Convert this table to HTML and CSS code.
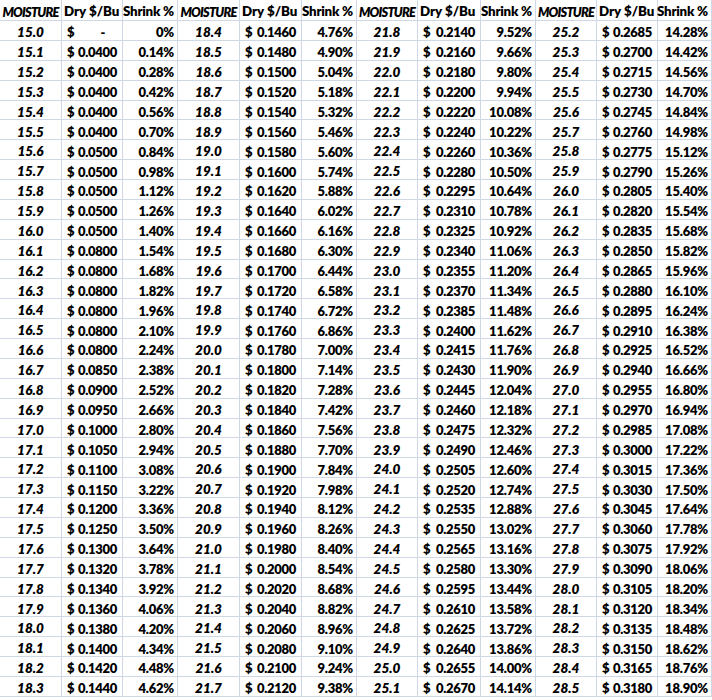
FILE: index.html
```html
<!DOCTYPE html>
<html>
<head>
<meta charset="utf-8">
<link rel="stylesheet" href="styles.css">
</head>
<body>
<div class="sheet">
<div class="h hm">MOISTURE</div><div class="h hd">Dry $/Bu</div><div class="h hs">Shrink %</div><div class="h hm">MOISTURE</div><div class="h hd">Dry $/Bu</div><div class="h hs">Shrink %</div><div class="h hm">MOISTURE</div><div class="h hd">Dry $/Bu</div><div class="h hs">Shrink %</div><div class="h hm">MOISTURE</div><div class="h hd">Dry $/Bu</div><div class="h hs">Shrink %</div>
<div class="m">15.0</div><div class="d z"><span>$</span><span>-</span></div><div class="s">0%</div><div class="m">18.4</div><div class="d"><span>$</span><span>0.1460</span></div><div class="s">4.76%</div><div class="m">21.8</div><div class="d"><span>$</span><span>0.2140</span></div><div class="s">9.52%</div><div class="m">25.2</div><div class="d"><span>$</span><span>0.2685</span></div><div class="s">14.28%</div>
<div class="m">15.1</div><div class="d"><span>$</span><span>0.0400</span></div><div class="s">0.14%</div><div class="m">18.5</div><div class="d"><span>$</span><span>0.1480</span></div><div class="s">4.90%</div><div class="m">21.9</div><div class="d"><span>$</span><span>0.2160</span></div><div class="s">9.66%</div><div class="m">25.3</div><div class="d"><span>$</span><span>0.2700</span></div><div class="s">14.42%</div>
<div class="m">15.2</div><div class="d"><span>$</span><span>0.0400</span></div><div class="s">0.28%</div><div class="m">18.6</div><div class="d"><span>$</span><span>0.1500</span></div><div class="s">5.04%</div><div class="m">22.0</div><div class="d"><span>$</span><span>0.2180</span></div><div class="s">9.80%</div><div class="m">25.4</div><div class="d"><span>$</span><span>0.2715</span></div><div class="s">14.56%</div>
<div class="m">15.3</div><div class="d"><span>$</span><span>0.0400</span></div><div class="s">0.42%</div><div class="m">18.7</div><div class="d"><span>$</span><span>0.1520</span></div><div class="s">5.18%</div><div class="m">22.1</div><div class="d"><span>$</span><span>0.2200</span></div><div class="s">9.94%</div><div class="m">25.5</div><div class="d"><span>$</span><span>0.2730</span></div><div class="s">14.70%</div>
<div class="m">15.4</div><div class="d"><span>$</span><span>0.0400</span></div><div class="s">0.56%</div><div class="m">18.8</div><div class="d"><span>$</span><span>0.1540</span></div><div class="s">5.32%</div><div class="m">22.2</div><div class="d"><span>$</span><span>0.2220</span></div><div class="s">10.08%</div><div class="m">25.6</div><div class="d"><span>$</span><span>0.2745</span></div><div class="s">14.84%</div>
<div class="m">15.5</div><div class="d"><span>$</span><span>0.0400</span></div><div class="s">0.70%</div><div class="m">18.9</div><div class="d"><span>$</span><span>0.1560</span></div><div class="s">5.46%</div><div class="m">22.3</div><div class="d"><span>$</span><span>0.2240</span></div><div class="s">10.22%</div><div class="m">25.7</div><div class="d"><span>$</span><span>0.2760</span></div><div class="s">14.98%</div>
<div class="m">15.6</div><div class="d"><span>$</span><span>0.0500</span></div><div class="s">0.84%</div><div class="m">19.0</div><div class="d"><span>$</span><span>0.1580</span></div><div class="s">5.60%</div><div class="m">22.4</div><div class="d"><span>$</span><span>0.2260</span></div><div class="s">10.36%</div><div class="m">25.8</div><div class="d"><span>$</span><span>0.2775</span></div><div class="s">15.12%</div>
<div class="m">15.7</div><div class="d"><span>$</span><span>0.0500</span></div><div class="s">0.98%</div><div class="m">19.1</div><div class="d"><span>$</span><span>0.1600</span></div><div class="s">5.74%</div><div class="m">22.5</div><div class="d"><span>$</span><span>0.2280</span></div><div class="s">10.50%</div><div class="m">25.9</div><div class="d"><span>$</span><span>0.2790</span></div><div class="s">15.26%</div>
<div class="m">15.8</div><div class="d"><span>$</span><span>0.0500</span></div><div class="s">1.12%</div><div class="m">19.2</div><div class="d"><span>$</span><span>0.1620</span></div><div class="s">5.88%</div><div class="m">22.6</div><div class="d"><span>$</span><span>0.2295</span></div><div class="s">10.64%</div><div class="m">26.0</div><div class="d"><span>$</span><span>0.2805</span></div><div class="s">15.40%</div>
<div class="m">15.9</div><div class="d"><span>$</span><span>0.0500</span></div><div class="s">1.26%</div><div class="m">19.3</div><div class="d"><span>$</span><span>0.1640</span></div><div class="s">6.02%</div><div class="m">22.7</div><div class="d"><span>$</span><span>0.2310</span></div><div class="s">10.78%</div><div class="m">26.1</div><div class="d"><span>$</span><span>0.2820</span></div><div class="s">15.54%</div>
<div class="m">16.0</div><div class="d"><span>$</span><span>0.0500</span></div><div class="s">1.40%</div><div class="m">19.4</div><div class="d"><span>$</span><span>0.1660</span></div><div class="s">6.16%</div><div class="m">22.8</div><div class="d"><span>$</span><span>0.2325</span></div><div class="s">10.92%</div><div class="m">26.2</div><div class="d"><span>$</span><span>0.2835</span></div><div class="s">15.68%</div>
<div class="m">16.1</div><div class="d"><span>$</span><span>0.0800</span></div><div class="s">1.54%</div><div class="m">19.5</div><div class="d"><span>$</span><span>0.1680</span></div><div class="s">6.30%</div><div class="m">22.9</div><div class="d"><span>$</span><span>0.2340</span></div><div class="s">11.06%</div><div class="m">26.3</div><div class="d"><span>$</span><span>0.2850</span></div><div class="s">15.82%</div>
<div class="m">16.2</div><div class="d"><span>$</span><span>0.0800</span></div><div class="s">1.68%</div><div class="m">19.6</div><div class="d"><span>$</span><span>0.1700</span></div><div class="s">6.44%</div><div class="m">23.0</div><div class="d"><span>$</span><span>0.2355</span></div><div class="s">11.20%</div><div class="m">26.4</div><div class="d"><span>$</span><span>0.2865</span></div><div class="s">15.96%</div>
<div class="m">16.3</div><div class="d"><span>$</span><span>0.0800</span></div><div class="s">1.82%</div><div class="m">19.7</div><div class="d"><span>$</span><span>0.1720</span></div><div class="s">6.58%</div><div class="m">23.1</div><div class="d"><span>$</span><span>0.2370</span></div><div class="s">11.34%</div><div class="m">26.5</div><div class="d"><span>$</span><span>0.2880</span></div><div class="s">16.10%</div>
<div class="m">16.4</div><div class="d"><span>$</span><span>0.0800</span></div><div class="s">1.96%</div><div class="m">19.8</div><div class="d"><span>$</span><span>0.1740</span></div><div class="s">6.72%</div><div class="m">23.2</div><div class="d"><span>$</span><span>0.2385</span></div><div class="s">11.48%</div><div class="m">26.6</div><div class="d"><span>$</span><span>0.2895</span></div><div class="s">16.24%</div>
<div class="m">16.5</div><div class="d"><span>$</span><span>0.0800</span></div><div class="s">2.10%</div><div class="m">19.9</div><div class="d"><span>$</span><span>0.1760</span></div><div class="s">6.86%</div><div class="m">23.3</div><div class="d"><span>$</span><span>0.2400</span></div><div class="s">11.62%</div><div class="m">26.7</div><div class="d"><span>$</span><span>0.2910</span></div><div class="s">16.38%</div>
<div class="m">16.6</div><div class="d"><span>$</span><span>0.0800</span></div><div class="s">2.24%</div><div class="m">20.0</div><div class="d"><span>$</span><span>0.1780</span></div><div class="s">7.00%</div><div class="m">23.4</div><div class="d"><span>$</span><span>0.2415</span></div><div class="s">11.76%</div><div class="m">26.8</div><div class="d"><span>$</span><span>0.2925</span></div><div class="s">16.52%</div>
<div class="m">16.7</div><div class="d"><span>$</span><span>0.0850</span></div><div class="s">2.38%</div><div class="m">20.1</div><div class="d"><span>$</span><span>0.1800</span></div><div class="s">7.14%</div><div class="m">23.5</div><div class="d"><span>$</span><span>0.2430</span></div><div class="s">11.90%</div><div class="m">26.9</div><div class="d"><span>$</span><span>0.2940</span></div><div class="s">16.66%</div>
<div class="m">16.8</div><div class="d"><span>$</span><span>0.0900</span></div><div class="s">2.52%</div><div class="m">20.2</div><div class="d"><span>$</span><span>0.1820</span></div><div class="s">7.28%</div><div class="m">23.6</div><div class="d"><span>$</span><span>0.2445</span></div><div class="s">12.04%</div><div class="m">27.0</div><div class="d"><span>$</span><span>0.2955</span></div><div class="s">16.80%</div>
<div class="m">16.9</div><div class="d"><span>$</span><span>0.0950</span></div><div class="s">2.66%</div><div class="m">20.3</div><div class="d"><span>$</span><span>0.1840</span></div><div class="s">7.42%</div><div class="m">23.7</div><div class="d"><span>$</span><span>0.2460</span></div><div class="s">12.18%</div><div class="m">27.1</div><div class="d"><span>$</span><span>0.2970</span></div><div class="s">16.94%</div>
<div class="m">17.0</div><div class="d"><span>$</span><span>0.1000</span></div><div class="s">2.80%</div><div class="m">20.4</div><div class="d"><span>$</span><span>0.1860</span></div><div class="s">7.56%</div><div class="m">23.8</div><div class="d"><span>$</span><span>0.2475</span></div><div class="s">12.32%</div><div class="m">27.2</div><div class="d"><span>$</span><span>0.2985</span></div><div class="s">17.08%</div>
<div class="m">17.1</div><div class="d"><span>$</span><span>0.1050</span></div><div class="s">2.94%</div><div class="m">20.5</div><div class="d"><span>$</span><span>0.1880</span></div><div class="s">7.70%</div><div class="m">23.9</div><div class="d"><span>$</span><span>0.2490</span></div><div class="s">12.46%</div><div class="m">27.3</div><div class="d"><span>$</span><span>0.3000</span></div><div class="s">17.22%</div>
<div class="m">17.2</div><div class="d"><span>$</span><span>0.1100</span></div><div class="s">3.08%</div><div class="m">20.6</div><div class="d"><span>$</span><span>0.1900</span></div><div class="s">7.84%</div><div class="m">24.0</div><div class="d"><span>$</span><span>0.2505</span></div><div class="s">12.60%</div><div class="m">27.4</div><div class="d"><span>$</span><span>0.3015</span></div><div class="s">17.36%</div>
<div class="m">17.3</div><div class="d"><span>$</span><span>0.1150</span></div><div class="s">3.22%</div><div class="m">20.7</div><div class="d"><span>$</span><span>0.1920</span></div><div class="s">7.98%</div><div class="m">24.1</div><div class="d"><span>$</span><span>0.2520</span></div><div class="s">12.74%</div><div class="m">27.5</div><div class="d"><span>$</span><span>0.3030</span></div><div class="s">17.50%</div>
<div class="m">17.4</div><div class="d"><span>$</span><span>0.1200</span></div><div class="s">3.36%</div><div class="m">20.8</div><div class="d"><span>$</span><span>0.1940</span></div><div class="s">8.12%</div><div class="m">24.2</div><div class="d"><span>$</span><span>0.2535</span></div><div class="s">12.88%</div><div class="m">27.6</div><div class="d"><span>$</span><span>0.3045</span></div><div class="s">17.64%</div>
<div class="m">17.5</div><div class="d"><span>$</span><span>0.1250</span></div><div class="s">3.50%</div><div class="m">20.9</div><div class="d"><span>$</span><span>0.1960</span></div><div class="s">8.26%</div><div class="m">24.3</div><div class="d"><span>$</span><span>0.2550</span></div><div class="s">13.02%</div><div class="m">27.7</div><div class="d"><span>$</span><span>0.3060</span></div><div class="s">17.78%</div>
<div class="m">17.6</div><div class="d"><span>$</span><span>0.1300</span></div><div class="s">3.64%</div><div class="m">21.0</div><div class="d"><span>$</span><span>0.1980</span></div><div class="s">8.40%</div><div class="m">24.4</div><div class="d"><span>$</span><span>0.2565</span></div><div class="s">13.16%</div><div class="m">27.8</div><div class="d"><span>$</span><span>0.3075</span></div><div class="s">17.92%</div>
<div class="m">17.7</div><div class="d"><span>$</span><span>0.1320</span></div><div class="s">3.78%</div><div class="m">21.1</div><div class="d"><span>$</span><span>0.2000</span></div><div class="s">8.54%</div><div class="m">24.5</div><div class="d"><span>$</span><span>0.2580</span></div><div class="s">13.30%</div><div class="m">27.9</div><div class="d"><span>$</span><span>0.3090</span></div><div class="s">18.06%</div>
<div class="m">17.8</div><div class="d"><span>$</span><span>0.1340</span></div><div class="s">3.92%</div><div class="m">21.2</div><div class="d"><span>$</span><span>0.2020</span></div><div class="s">8.68%</div><div class="m">24.6</div><div class="d"><span>$</span><span>0.2595</span></div><div class="s">13.44%</div><div class="m">28.0</div><div class="d"><span>$</span><span>0.3105</span></div><div class="s">18.20%</div>
<div class="m">17.9</div><div class="d"><span>$</span><span>0.1360</span></div><div class="s">4.06%</div><div class="m">21.3</div><div class="d"><span>$</span><span>0.2040</span></div><div class="s">8.82%</div><div class="m">24.7</div><div class="d"><span>$</span><span>0.2610</span></div><div class="s">13.58%</div><div class="m">28.1</div><div class="d"><span>$</span><span>0.3120</span></div><div class="s">18.34%</div>
<div class="m">18.0</div><div class="d"><span>$</span><span>0.1380</span></div><div class="s">4.20%</div><div class="m">21.4</div><div class="d"><span>$</span><span>0.2060</span></div><div class="s">8.96%</div><div class="m">24.8</div><div class="d"><span>$</span><span>0.2625</span></div><div class="s">13.72%</div><div class="m">28.2</div><div class="d"><span>$</span><span>0.3135</span></div><div class="s">18.48%</div>
<div class="m">18.1</div><div class="d"><span>$</span><span>0.1400</span></div><div class="s">4.34%</div><div class="m">21.5</div><div class="d"><span>$</span><span>0.2080</span></div><div class="s">9.10%</div><div class="m">24.9</div><div class="d"><span>$</span><span>0.2640</span></div><div class="s">13.86%</div><div class="m">28.3</div><div class="d"><span>$</span><span>0.3150</span></div><div class="s">18.62%</div>
<div class="m">18.2</div><div class="d"><span>$</span><span>0.1420</span></div><div class="s">4.48%</div><div class="m">21.6</div><div class="d"><span>$</span><span>0.2100</span></div><div class="s">9.24%</div><div class="m">25.0</div><div class="d"><span>$</span><span>0.2655</span></div><div class="s">14.00%</div><div class="m">28.4</div><div class="d"><span>$</span><span>0.3165</span></div><div class="s">18.76%</div>
<div class="m">18.3</div><div class="d"><span>$</span><span>0.1440</span></div><div class="s">4.62%</div><div class="m">21.7</div><div class="d"><span>$</span><span>0.2120</span></div><div class="s">9.38%</div><div class="m">25.1</div><div class="d"><span>$</span><span>0.2670</span></div><div class="s">14.14%</div><div class="m">28.5</div><div class="d"><span>$</span><span>0.3180</span></div><div class="s">18.90%</div>
</div>
</body>
</html>
```

FILE: styles.css
```css
html, body {
  margin: 0;
  padding: 0;
  background: #ffffff;
}

.sheet {
  display: grid;
  width: 712px;
  grid-template-columns: 62px 61px 55px 62px 62px 55px 61px 63px 55px 61px 61px 54px;
  grid-template-rows: 21px repeat(34, 19.88px);
  font-family: Lato, "Liberation Sans", sans-serif;
  font-weight: 800;
  font-size: 13px;
  color: #000000;
}

.sheet > div {
  box-sizing: border-box;
  border-right: 1px solid #d0d7e5;
  border-bottom: 1px solid #d0d7e5;
  white-space: nowrap;
  overflow: visible;
  display: flex;
  align-items: center;
  line-height: 1;
  padding-top: 5px;
}

.sheet > .h {
  padding-top: 4px;
  font-size: 13.3px;
}

.sheet > .hm {
  font-style: italic;
  justify-content: center;
  letter-spacing: -0.8px;
  font-size: 12.8px;
}

.hd {
  justify-content: flex-start;
  padding-left: 2px;
}

.hs {
  justify-content: flex-end;
  padding-right: 3px;
  letter-spacing: -0.2px;
}

.m {
  font-style: italic;
  justify-content: center;
  font-size: 13.5px;
}

.sheet > .d {
  justify-content: space-between;
  padding-left: 5px;
  padding-right: 5px;
  letter-spacing: -0.3px;
}

.sheet > .d.z {
  padding-right: 17px;
}

.s {
  justify-content: flex-end;
  padding-right: 3px;
  letter-spacing: -0.2px;
}
```
